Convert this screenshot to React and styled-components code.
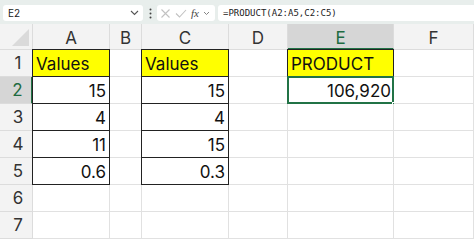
import React from 'react';
import styled, { createGlobalStyle } from 'styled-components';

const Global = createGlobalStyle`
  html, body { margin: 0; padding: 0; background: #fff; }
  body { font-family: Inter, "Open Sans", sans-serif; overflow: hidden; }
`;

const Page = styled.div`
  width: 474px;
  height: 246px;
  overflow: hidden;
  background: #fff;
`;

const TopBar = styled.div`
  display: flex;
  align-items: center;
  height: 22px;
  padding: 2px 0 0 3px;
  background: #e8eeec;
`;

const NameBox = styled.div`
  display: flex;
  align-items: center;
  justify-content: space-between;
  width: 140px;
  height: 16px;
  padding: 0 4px 0 5px;
  box-sizing: border-box;
  background: #fff;
  border-radius: 3px;
  font-size: 10px;
  color: #222;
`;

const Dots = styled.div`
  width: 14px;
  display: flex;
  justify-content: center;
`;

const Tools = styled.div`
  display: flex;
  align-items: center;
  gap: 4px;
  width: 58px;
  height: 16px;
  padding: 0 3px;
  box-sizing: border-box;
  background: #fff;
  border-radius: 3px;
  margin-right: 3px;
`;

const Fx = styled.span`
  font-family: "Liberation Serif", serif;
  font-style: italic;
  font-size: 11px;
  color: #444;
`;

const FormulaBox = styled.div`
  flex: 1;
  height: 16px;
  display: flex;
  align-items: center;
  padding-left: 5px;
  background: #fff;
  border-radius: 3px 0 0 3px;
  font-family: "DejaVu Sans Mono", "Liberation Mono", monospace;
  font-size: 9px;
  color: #222;
`;

const Sheet = styled.div`
  display: grid;
  grid-template-columns: 33px 77px 32px 87px 59px 106px 1fr;
  grid-template-rows: 26px repeat(7, 27px);
`;

const Corner = styled.div`
  background: #f3f3f3;
  border-right: 1px solid #dcdcdc;
  border-bottom: 1px solid #dcdcdc;
  box-sizing: border-box;
  display: flex;
  align-items: flex-end;
  justify-content: flex-end;
  padding: 0 3px 3px 0;
`;

const ColHead = styled.div`
  display: flex;
  align-items: center;
  justify-content: center;
  box-sizing: border-box;
  background: ${p => (p.$active ? '#d6d6d6' : '#f3f3f3')};
  color: ${p => (p.$active ? '#1e6b41' : '#333')};
  border-right: 1px solid #dcdcdc;
  border-bottom: ${p => (p.$active ? '2px solid #217346' : '1px solid #dcdcdc')};
  font-size: 17px;
  padding-top: 3px;
`;

const RowHead = styled.div`
  display: flex;
  align-items: center;
  justify-content: center;
  box-sizing: border-box;
  background: ${p => (p.$active ? '#d6d6d6' : '#f3f3f3')};
  color: ${p => (p.$active ? '#1e6b41' : '#333')};
  border-right: ${p => (p.$active ? '2px solid #217346' : '1px solid #dcdcdc')};
  border-bottom: 1px solid #dcdcdc;
  font-size: 17px;
  padding-left: 4px;
`;

const Cell = styled.div`
  position: relative;
  display: flex;
  align-items: center;
  justify-content: ${p => (p.$num ? 'flex-end' : 'flex-start')};
  box-sizing: border-box;
  padding: 2px 3px 0 3px;
  font-size: 17px;
  color: #111;
  white-space: nowrap;
  background: ${p => (p.$yellow ? '#ffff00' : '#fff')};
  border-right: 1px solid ${p => (p.$box ? '#222' : '#e1e1e1')};
  border-bottom: 1px solid ${p => (p.$box ? '#222' : '#e1e1e1')};
  box-shadow: ${p =>
    p.$box
      ? p.$top
        ? '-1px 0 0 #222, 0 -1px 0 #222, -1px -1px 0 #222'
        : '-1px 0 0 #222'
      : 'none'};
  ${p =>
    p.$selected &&
    `
    border: none;
    box-shadow: inset 0 0 0 2px #217346;
    margin: -1px 0 0 -1px;
  `}
`;

const Handle = styled.span`
  position: absolute;
  right: -3px;
  bottom: -3px;
  width: 5px;
  height: 5px;
  background: #217346;
  border: 1px solid #fff;
  box-sizing: border-box;
`;

const cols = ['A', 'B', 'C', 'D', 'E', 'F'];
const colA = ['Values', '15', '4', '11', '0.6'];
const colC = ['Values', '15', '4', '15', '0.3'];

function Chevron() {
  return (
    <svg width="9" height="6" viewBox="0 0 9 6">
      <path d="M1 1l3.5 3.5L8 1" fill="none" stroke="#555" strokeWidth="1.1" />
    </svg>
  );
}

function App() {
  const rows = [];
  for (let r = 1; r <= 7; r++) {
    const i = r - 1;
    const a = colA[i];
    const c = colC[i];
    rows.push(
      <React.Fragment key={r}>
        <RowHead $active={r === 2}>{r}</RowHead>
        <Cell $box={a !== undefined} $top={r === 1} $yellow={r === 1} $num={r > 1}>{a}</Cell>
        <Cell />
        <Cell $box={c !== undefined} $top={r === 1} $yellow={r === 1} $num={r > 1}>{c}</Cell>
        <Cell />
        {r === 1 && <Cell $box $top $yellow>PRODUCT</Cell>}
        {r === 2 && (
          <Cell $selected $num>
            106,920
            <Handle />
          </Cell>
        )}
        {r > 2 && <Cell />}
        <Cell />
      </React.Fragment>
    );
  }

  return (
    <Page>
      <Global />
      <TopBar>
        <NameBox>
          E2
          <Chevron />
        </NameBox>
        <Dots>
          <svg width="3" height="11" viewBox="0 0 3 11">
            <circle cx="1.5" cy="1.5" r="1" fill="#444" />
            <circle cx="1.5" cy="5.5" r="1" fill="#444" />
            <circle cx="1.5" cy="9.5" r="1" fill="#444" />
          </svg>
        </Dots>
        <Tools>
          <svg width="11" height="11" viewBox="0 0 11 11">
            <path d="M1.5 1.5l8 8M9.5 1.5l-8 8" stroke="#c2c2c2" strokeWidth="1.1" />
          </svg>
          <svg width="12" height="11" viewBox="0 0 12 11">
            <path d="M1 5.5l3.5 3.5L11 2" fill="none" stroke="#c2c2c2" strokeWidth="1.1" />
          </svg>
          <Fx>fx</Fx>
          <svg width="7" height="5" viewBox="0 0 7 5">
            <path d="M1 1l2.5 2.5L6 1" fill="none" stroke="#777" strokeWidth="0.9" />
          </svg>
        </Tools>
        <FormulaBox>=PRODUCT(A2:A5,C2:C5)</FormulaBox>
      </TopBar>
      <Sheet>
        <Corner>
          <svg width="17" height="17" viewBox="0 0 17 17">
            <path d="M17 0V17H0Z" fill="#dadada" />
          </svg>
        </Corner>
        {cols.map(c => (
          <ColHead key={c} $active={c === 'E'}>{c}</ColHead>
        ))}
        {rows}
      </Sheet>
    </Page>
  );
}

export default App;
